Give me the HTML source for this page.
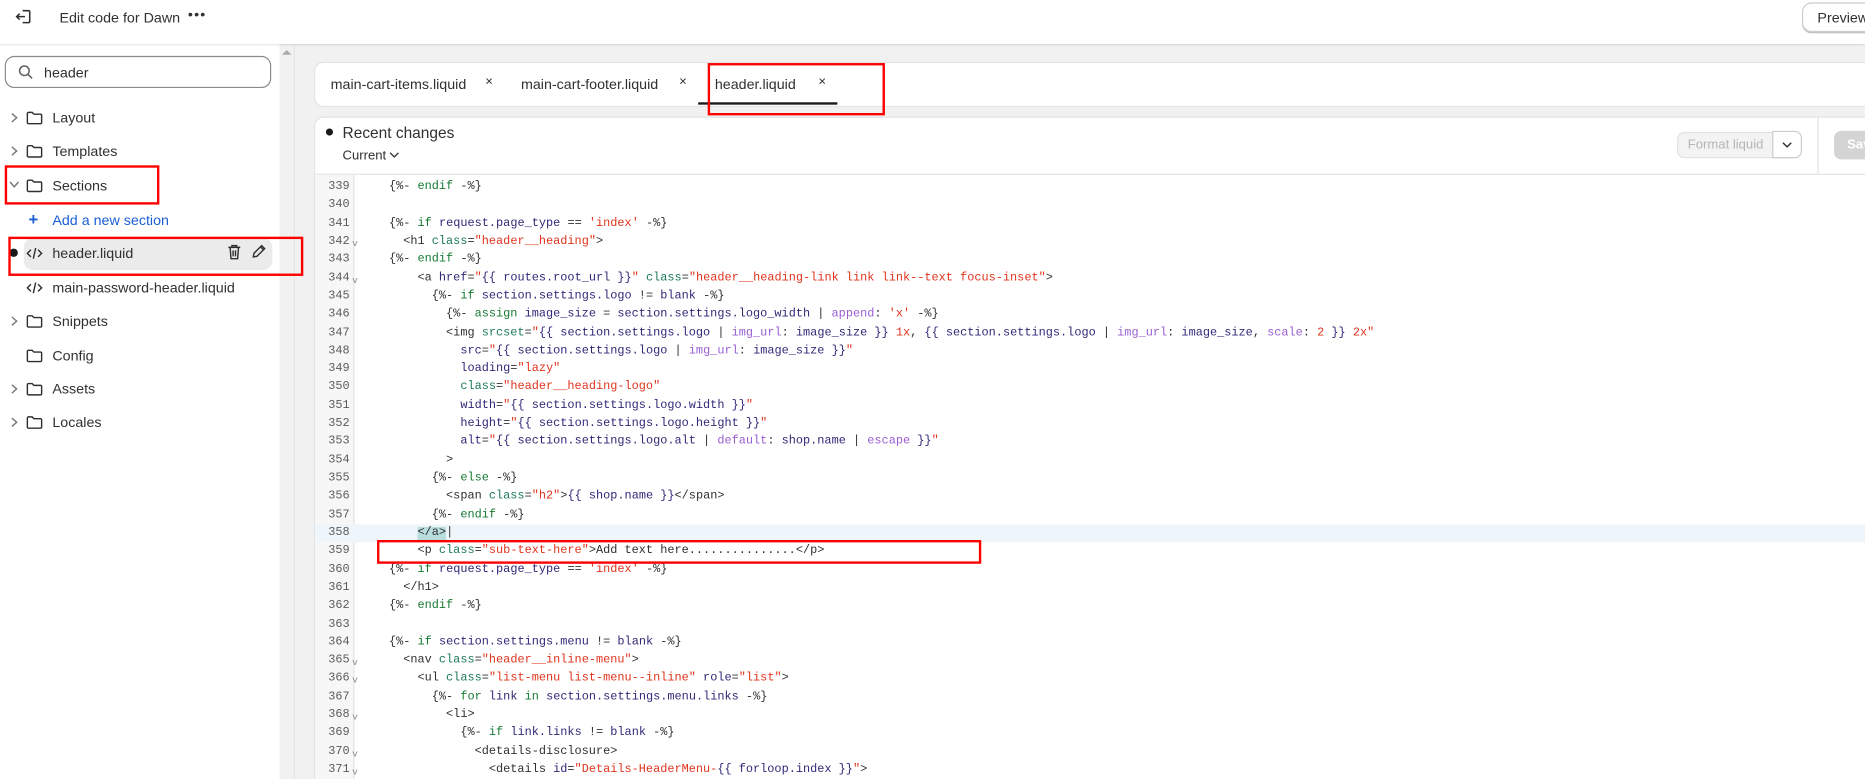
<!DOCTYPE html>
<html><head><meta charset="utf-8"><style>
*{box-sizing:border-box;margin:0;padding:0}
html,body{width:1865px;height:779px;overflow:hidden;background:#f1f1f1}
#w{width:1568px;height:655px;overflow:hidden;background:#f1f1f1;font-family:"Liberation Sans",sans-serif;color:#303030;position:relative;transform:scale(1.18941);transform-origin:0 0}
.top{position:absolute;left:0;top:0;width:1568px;height:37px;background:#fff;box-shadow:0 1px 2px rgba(0,0,0,.15);z-index:2}
.side{position:absolute;left:0;top:37px;width:235px;height:742px;background:#fff}
.sb{position:absolute;left:235px;top:37px;width:13px;height:742px;background:#f1f1f1;border-right:1px solid #e6e6e6}
.abs{position:absolute}
.t13{font-size:12px}
.card{position:absolute;background:#fff;border:1px solid #e3e3e3}
.code{position:absolute;left:303px;top:150px;font-family:"Liberation Mono",monospace;font-size:10px;line-height:15.31px;white-space:pre;color:#303030}
.ln{position:absolute;left:264px;top:150px;width:30px;text-align:right;font-family:"Liberation Mono",monospace;font-size:10px;line-height:15.31px;color:#5c5c5c;white-space:pre}
.k{color:#177a34}.s{color:#e0341e}.v{color:#2f2a78}.f{color:#9a5fd3}.a{color:#1f7a58}
.red{position:absolute;border:2px solid #f00}
</style></head><body><div id="w">
<div class="top">
<svg class="abs" style="left:13px;top:7px" width="14" height="14" viewBox="0 0 14 14" fill="none" stroke="#303030" stroke-width="1.3"><path d="M6 2h5a1 1 0 0 1 1 1v8a1 1 0 0 1-1 1H6"/><path d="M8 7H1M3.5 4.5 1 7l2.5 2.5"/></svg>
<div class="abs t13" style="left:50px;top:8px;color:#303030">Edit code for Dawn</div>
<div class="abs" style="left:158px;top:5px;font-size:12px;letter-spacing:1px">•••</div>
<div class="abs" style="left:1515px;top:2px;width:360px;height:25px;border:1px solid #ccc;border-radius:8px;font-size:12px;padding:5px 0 0 12px;box-shadow:0 1px 0 #bbb">Preview s</div>
</div>
<div class="side"></div>
<div class="sb"><div class="abs" style="left:2px;top:5px;width:0;height:0;border-left:4px solid transparent;border-right:4px solid transparent;border-bottom:4px solid #aaa"></div></div>
<div class="abs" style="left:4px;top:47px;width:224px;height:27px;border:1px solid #8a8a8a;border-radius:8px;background:#fff"></div>
<svg class="abs" style="left:15px;top:54px" width="13" height="13" viewBox="0 0 13 13" fill="none" stroke="#616161" stroke-width="1.3"><circle cx="5.5" cy="5.5" r="4"/><path d="M8.5 8.5 12 12"/></svg>
<div class="abs t13" style="left:37px;top:54px">header</div>

<svg width="0" height="0" style="position:absolute"><defs><symbol id="fd" viewBox="0 0 14 12"><path d="M1 2.5a1 1 0 0 1 1-1h3l1.5 1.5H12a1 1 0 0 1 1 1V10a1 1 0 0 1-1 1H2a1 1 0 0 1-1-1z" fill="none" stroke="#303030" stroke-width="1.2"/></symbol>
<symbol id="ch" viewBox="0 0 8 10"><path d="M2 1.5 6 5 2 8.5" fill="none" stroke="#777" stroke-width="1.2"/></symbol>
<symbol id="cd" viewBox="0 0 14 12"><path d="M4 3 1 6l3 3M10 3l3 3-3 3M8 1.5 6 10.5" fill="none" stroke="#303030" stroke-width="1.2"/></symbol></defs></svg>

<svg class="abs" style="left:8px;top:94px" width="8" height="10"><use href="#ch"/></svg><svg class="abs" style="left:22px;top:93px" width="14" height="12"><use href="#fd"/></svg><div class="abs t13" style="left:44px;top:92px">Layout</div>
<svg class="abs" style="left:8px;top:122px" width="8" height="10"><use href="#ch"/></svg><svg class="abs" style="left:22px;top:121px" width="14" height="12"><use href="#fd"/></svg><div class="abs t13" style="left:44px;top:120px">Templates</div>
<svg class="abs" style="left:7px;top:151px" width="10" height="8" viewBox="0 0 10 8"><path d="M1.5 2 5 6 8.5 2" fill="none" stroke="#777" stroke-width="1.2"/></svg><svg class="abs" style="left:22px;top:150px" width="14" height="12"><use href="#fd"/></svg><div class="abs t13" style="left:44px;top:149px">Sections</div>
<div class="abs" style="left:24px;top:176px;color:#1a5fd6;font-size:14px;font-weight:bold">+</div><div class="abs t13" style="left:44px;top:178px;color:#1a5fd6">Add a new section</div>
<div class="abs" style="left:20px;top:200px;width:209px;height:27px;background:#ebebeb;border-radius:8px"></div>
<div class="abs" style="left:8px;top:209px;width:7px;height:7px;border-radius:50%;background:#1a1a1a"></div>
<svg class="abs" style="left:22px;top:207px" width="14" height="12"><use href="#cd"/></svg><div class="abs t13" style="left:44px;top:206px">header.liquid</div>
<svg class="abs" style="left:191px;top:205px" width="12" height="14" viewBox="0 0 12 14" fill="none" stroke="#303030" stroke-width="1.2"><path d="M1 3h10M4 3V1.5h4V3M2.5 3l.7 9.5h5.6L9.5 3M5 5.5v5M7 5.5v5"/></svg>
<svg class="abs" style="left:211px;top:205px" width="13" height="13" viewBox="0 0 13 13" fill="none" stroke="#303030" stroke-width="1.2"><path d="M2 11l.5-3L9 1.5l2.5 2.5L5 10.5z M8 2.5l2.5 2.5"/></svg>
<svg class="abs" style="left:22px;top:236px" width="14" height="12"><use href="#cd"/></svg><div class="abs t13" style="left:44px;top:235px">main-password-header.liquid</div>
<svg class="abs" style="left:8px;top:265px" width="8" height="10"><use href="#ch"/></svg><svg class="abs" style="left:22px;top:264px" width="14" height="12"><use href="#fd"/></svg><div class="abs t13" style="left:44px;top:263px">Snippets</div>
<svg class="abs" style="left:22px;top:293px" width="14" height="12"><use href="#fd"/></svg><div class="abs t13" style="left:44px;top:292px">Config</div>
<svg class="abs" style="left:8px;top:322px" width="8" height="10"><use href="#ch"/></svg><svg class="abs" style="left:22px;top:321px" width="14" height="12"><use href="#fd"/></svg><div class="abs t13" style="left:44px;top:320px">Assets</div>
<svg class="abs" style="left:8px;top:350px" width="8" height="10"><use href="#ch"/></svg><svg class="abs" style="left:22px;top:349px" width="14" height="12"><use href="#fd"/></svg><div class="abs t13" style="left:44px;top:348px">Locales</div>

<div class="card" style="left:264px;top:52px;width:1610px;height:38px;border-radius:8px 0 0 8px;border-right:none"></div>
<div class="abs" style="left:278px;top:64px;font-size:12px">main-cart-items.liquid</div><div class="abs" style="left:408px;top:63px;font-size:11px">×</div>
<div class="abs" style="left:438px;top:64px;font-size:12px">main-cart-footer.liquid</div><div class="abs" style="left:571px;top:63px;font-size:11px">×</div>
<div class="abs" style="left:601px;top:64px;font-size:12px">header.liquid</div><div class="abs" style="left:688px;top:63px;font-size:11px">×</div>
<div class="abs" style="left:587px;top:86px;width:117px;height:2px;background:#1a1a1a"></div>

<div class="card" style="left:264px;top:98px;width:1610px;height:690px;border-radius:8px 0 0 0;border-right:none"></div>
<div class="abs" style="left:274px;top:108px;width:6px;height:6px;border-radius:50%;background:#1a1a1a"></div>
<div class="abs" style="left:288px;top:104px;font-size:13px;color:#303030">Recent changes</div>
<div class="abs" style="left:288px;top:125px;font-size:11px">Current</div>
<svg class="abs" style="left:327px;top:127px" width="9" height="7" viewBox="0 0 9 7"><path d="M1 1.5 4.5 5 8 1.5" fill="none" stroke="#303030" stroke-width="1.1"/></svg>
<div class="abs" style="left:1410px;top:111px;width:104px;height:22px;border-radius:6px;background:#f3f3f3;border:1px solid #e3e3e3"></div>
<div class="abs" style="left:1419px;top:116px;font-size:11px;color:#b5b5b5">Format liquid</div>
<div class="abs" style="left:1490px;top:110px;width:25px;height:23px;border:1px solid #ccc;border-radius:0 6px 6px 0;background:#fff"></div>
<svg class="abs" style="left:1498px;top:119px" width="9" height="6" viewBox="0 0 9 6"><path d="M1 1 4.5 4.5 8 1" fill="none" stroke="#303030" stroke-width="1.2"/></svg>
<div class="abs" style="left:1528px;top:98px;width:1px;height:48px;background:#e3e3e3"></div>
<div class="abs" style="left:1542px;top:110px;width:40px;height:24px;border-radius:6px;background:#d4d4d4;color:#fff;font-size:11px;padding:6px 0 0 11px;font-weight:bold">Sav</div>
<div class="abs" style="left:265px;top:146px;width:1600px;height:1px;background:#e3e3e3"></div>
<div class="abs" style="left:265px;top:147px;width:33px;height:632px;background:#f7f7f7;border-right:1px solid #e3e3e3"></div>
<div class="abs" style="left:265px;top:441px;width:1600px;height:15px;background:#eef6fc"></div>

<div class="ln">339
340
341
342
343
344
345
346
347
348
349
350
351
352
353
354
355
356
357
358
359
360
361
362
363
364
365
366
367
368
369
370
371</div>
<div class="abs" style="left:296px;top:152px;font-family:'Liberation Mono';font-size:8px;line-height:15.31px;color:#888;white-space:pre">


v

v




















v
v

v

v
v</div>
<div class="code">    {%- <span class="k">endif</span> -%}

    {%- <span class="k">if</span> <span class="v">request.page_type</span> == <span class="s">'index'</span> -%}
      &lt;h1 <span class="a">class</span>=<span class="s">"header__heading"</span>&gt;
    {%- <span class="k">endif</span> -%}
        &lt;a <span class="v">href</span>=<span class="s">"</span><span class="v">{{ routes.root_url }}</span><span class="s">"</span> <span class="a">class</span>=<span class="s">"header__heading-link link link--text focus-inset"</span>&gt;
          {%- <span class="k">if</span> <span class="v">section.settings.logo</span> != <span class="v">blank</span> -%}
            {%- <span class="k">assign</span> <span class="v">image_size</span> = <span class="v">section.settings.logo_width</span> | <span class="f">append</span>: <span class="s">'x'</span> -%}
            &lt;img <span class="a">srcset</span>=<span class="s">"</span><span class="v">{{ section.settings.logo</span> | <span class="f">img_url</span>: <span class="v">image_size }}</span> <span class="s">1x</span>, <span class="v">{{ section.settings.logo</span> | <span class="f">img_url</span>: <span class="v">image_size</span>, <span class="f">scale</span>: <span class="s">2</span> <span class="v">}}</span> <span class="s">2x"</span>
              <span class="v">src</span>=<span class="s">"</span><span class="v">{{ section.settings.logo</span> | <span class="f">img_url</span>: <span class="v">image_size }}</span><span class="s">"</span>
              <span class="v">loading</span>=<span class="s">"lazy"</span>
              <span class="a">class</span>=<span class="s">"header__heading-logo"</span>
              <span class="v">width</span>=<span class="s">"</span><span class="v">{{ section.settings.logo.width }}</span><span class="s">"</span>
              <span class="v">height</span>=<span class="s">"</span><span class="v">{{ section.settings.logo.height }}</span><span class="s">"</span>
              <span class="v">alt</span>=<span class="s">"</span><span class="v">{{ section.settings.logo.alt</span> | <span class="f">default</span>: <span class="v">shop.name</span> | <span class="f">escape</span> <span class="v">}}</span><span class="s">"</span>
            &gt;
          {%- <span class="k">else</span> -%}
            &lt;span <span class="a">class</span>=<span class="s">"h2"</span>&gt;<span class="v">{{ shop.name }}</span>&lt;/span&gt;
          {%- <span class="k">endif</span> -%}
        <span style="background:#b9dcdc">&lt;/a&gt;</span>|
        &lt;p <span class="a">class</span>=<span class="s">"sub-text-here"</span>&gt;Add text here...............&lt;/p&gt;
    {%- <span class="k">if</span> <span class="v">request.page_type</span> == <span class="s">'index'</span> -%}
      &lt;/h1&gt;
    {%- <span class="k">endif</span> -%}

    {%- <span class="k">if</span> <span class="v">section.settings.menu</span> != <span class="v">blank</span> -%}
      &lt;nav <span class="a">class</span>=<span class="s">"header__inline-menu"</span>&gt;
        &lt;ul <span class="a">class</span>=<span class="s">"list-menu list-menu--inline"</span> <span class="v">role</span>=<span class="s">"list"</span>&gt;
          {%- <span class="k">for</span> <span class="v">link</span> <span class="k">in</span> <span class="v">section.settings.menu.links</span> -%}
            &lt;li&gt;
              {%- <span class="k">if</span> <span class="v">link.links</span> != <span class="v">blank</span> -%}
                &lt;details-disclosure&gt;
                  &lt;details <span class="v">id</span>=<span class="s">"Details-HeaderMenu-</span><span class="v">{{ forloop.index }}</span><span class="s">"</span>&gt;</div>

<div class="red" style="left:4px;top:139px;width:130px;height:33px"></div>
<div class="red" style="left:7px;top:199px;width:248px;height:33px"></div>
<div class="red" style="left:595px;top:53px;width:149px;height:44px"></div>
<div class="red" style="left:317px;top:454px;width:508px;height:20px"></div>
</div></body></html>
